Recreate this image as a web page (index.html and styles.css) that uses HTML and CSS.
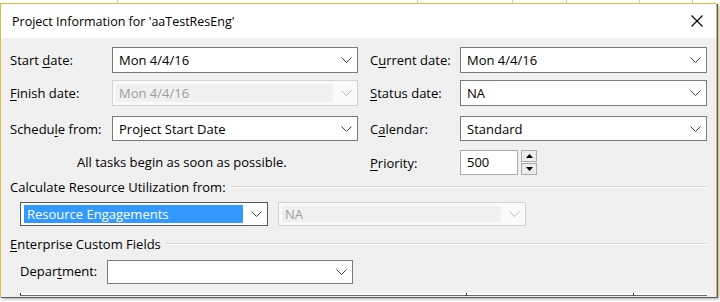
FILE: index.html
```html
<!DOCTYPE html>
<html lang="en">

<head>
  <meta charset="UTF-8">
  <title>Project Information</title>
  <link rel="stylesheet" href="styles.css">
</head>

<body>
  <div class="backdrop">
    <span style="width:118px"></span>
    <span style="width:300px"></span>
    <span style="width:95px"></span>
    <span style="width:54px"></span>
    <span style="width:73px"></span>
    <span style="width:53px"></span>
  </div>

  <div class="dialog">
    <div class="titlebar">
      <span class="title">Project Information for 'aaTestResEng'</span>
      <svg class="close" width="12" height="12" viewBox="0 0 12 12">
        <path d="M0.5 0.5 L11.5 11.5 M11.5 0.5 L0.5 11.5" stroke="#000" stroke-width="1.1" fill="none" />
      </svg>
    </div>

    <div class="content">
      <div class="form">
        <div class="lbl">Start <u>d</u>ate:</div>
        <div class="combo h26">
          <span class="val">Mon 4/4/16</span>
          <svg class="chev" width="11" height="6" viewBox="0 0 11 6"><polyline points="0.5,0.5 5.5,5.5 10.5,0.5" /></svg>
        </div>
        <div></div>
        <div class="lbl">C<u>u</u>rrent date:</div>
        <div class="combo h26">
          <span class="val">Mon 4/4/16</span>
          <svg class="chev" width="11" height="6" viewBox="0 0 11 6"><polyline points="0.5,0.5 5.5,5.5 10.5,0.5" /></svg>
        </div>

        <div class="lbl"><u>F</u>inish date:</div>
        <div class="combo h26 disabled">
          <span class="field">Mon 4/4/16</span>
          <svg class="chev" width="11" height="6" viewBox="0 0 11 6"><polyline points="0.5,0.5 5.5,5.5 10.5,0.5" /></svg>
        </div>
        <div></div>
        <div class="lbl"><u>S</u>tatus date:</div>
        <div class="combo h26">
          <span class="val">NA</span>
          <svg class="chev" width="11" height="6" viewBox="0 0 11 6"><polyline points="0.5,0.5 5.5,5.5 10.5,0.5" /></svg>
        </div>

        <div class="lbl">Schedu<u>l</u>e from:</div>
        <div class="combo">
          <span class="val">Project Start Date</span>
          <svg class="chev" width="11" height="6" viewBox="0 0 11 6"><polyline points="0.5,0.5 5.5,5.5 10.5,0.5" /></svg>
        </div>
        <div></div>
        <div class="lbl">C<u>a</u>lendar:</div>
        <div class="combo">
          <span class="val">Standard</span>
          <svg class="chev" width="11" height="6" viewBox="0 0 11 6"><polyline points="0.5,0.5 5.5,5.5 10.5,0.5" /></svg>
        </div>

        <div class="note">All tasks begin as soon as possible.</div>
        <div></div>
        <div class="lbl"><u>P</u>riority:</div>
        <div class="priority">
          <div class="num">500</div>
          <div class="spin">
            <div class="spin-btn"><svg width="7" height="4" viewBox="0 0 7 4"><polygon points="3.5,0 7,4 0,4" /></svg></div>
            <div class="spin-btn"><svg width="7" height="4" viewBox="0 0 7 4"><polygon points="0,0 7,0 3.5,4" /></svg></div>
          </div>
        </div>
      </div>

      <div class="section">Calculate Resource Utilization from:</div>
      <div class="util">
        <div class="combo h24 focused">
          <span class="selected">Resource Engagements</span>
          <svg class="chev" width="11" height="6" viewBox="0 0 11 6"><polyline points="0.5,0.5 5.5,5.5 10.5,0.5" /></svg>
        </div>
        <div class="combo h24 disabled">
          <span class="field">NA</span>
          <svg class="chev" width="11" height="6" viewBox="0 0 11 6"><polyline points="0.5,0.5 5.5,5.5 10.5,0.5" /></svg>
        </div>
      </div>

      <div class="section"><u>E</u>nterprise Custom Fields</div>
      <div class="dept">
        <div class="lbl">Depar<u>t</u>ment:</div>
        <div class="combo h24">
          <span class="val"></span>
          <svg class="chev" width="11" height="6" viewBox="0 0 11 6"><polyline points="0.5,0.5 5.5,5.5 10.5,0.5" /></svg>
        </div>
      </div>

      <div class="grid-edge">
        <span class="tick" style="left:445px"></span>
        <span class="tick" style="left:612px"></span>
      </div>
    </div>
  </div>
</body>

</html>
```

FILE: styles.css
```css
html,
body {
  margin: 0;
  background: #fff;
}

body {
  font-family: "Open Sans", "Noto Sans", sans-serif;
  font-size: 13px;
  color: #000;
  width: 720px;
  height: 302px;
  overflow: hidden;
}

u {
  text-decoration-thickness: 1px;
  text-underline-offset: 2px;
}

.backdrop {
  display: flex;
  height: 3px;
  background: #fff;
}

.backdrop span {
  flex: none;
  height: 3px;
  border-right: 1px solid #c8c8c8;
  box-sizing: border-box;
}

.dialog {
  box-sizing: border-box;
  width: 717px;
  height: 294px;
  border: 1px solid #dbbd45;
  border-bottom: 0;
  background: #f0f0f0;
  box-shadow: 1px 1px 0 #5a5a5a, 2px 2px 3px rgba(0, 0, 0, .35);
  overflow: hidden;
}

.titlebar {
  display: flex;
  align-items: center;
  height: 34px;
  padding: 0 13px 0 11px;
  background: #fff;
}

.title {
  font-size: 12.5px;
  flex-grow: 1;
}

.close {
  flex: none;
}

.content {
  padding: 9px 9px 0 9px;
}

.form {
  display: grid;
  grid-template-columns: 102px 246px 12px 90px 247px;
  grid-template-rows: 33px 36px 34px 25px;
}

.lbl {
  line-height: 26px;
  white-space: nowrap;
}

.combo {
  box-sizing: border-box;
  display: flex;
  align-items: center;
  height: 25px;
  border: 1px solid #7a7a7a;
  background: #fff;
}

.combo.h26 {
  height: 26px;
}

.combo.h24 {
  height: 24px;
}

.combo .val {
  flex-grow: 1;
  padding-left: 6px;
}

.chev {
  flex: none;
  margin: 0 5px 0 8px;
}

.chev polyline {
  fill: none;
  stroke: #404040;
  stroke-width: 1;
}

.combo.disabled {
  border-color: #d4d4d4;
  background: #fafafa;
  color: #9d9d9d;
}

.combo.disabled .field {
  flex-grow: 1;
  align-self: stretch;
  margin: 3px 0 3px 3px;
  padding-left: 3px;
  background: #f0f0f0;
  display: flex;
  align-items: center;
}

.combo.disabled .chev polyline {
  stroke: #b5b5b5;
}

.combo.focused {
  border-color: #595959;
}

.combo .selected {
  flex-grow: 1;
  align-self: stretch;
  margin: 2px 0 2px 3px;
  padding-left: 3px;
  background: #3399ff;
  color: #fff;
  display: flex;
  align-items: center;
}

.note {
  grid-column: 1 / 3;
  padding-left: 67px;
  line-height: 24px;
}

.priority {
  display: flex;
  gap: 3px;
}

.num {
  box-sizing: border-box;
  width: 58px;
  height: 25px;
  border: 1px solid #ababab;
  background: #fff;
  padding-left: 6px;
  line-height: 23px;
}

.spin {
  display: flex;
  flex-direction: column;
  gap: 1px;
  width: 16px;
}

.spin-btn {
  box-sizing: border-box;
  height: 12px;
  border: 1px solid #adadad;
  background: #ededed;
  display: flex;
  align-items: center;
  justify-content: center;
}

.spin-btn polygon {
  fill: #000;
}

.section {
  display: flex;
  align-items: center;
  margin-top: 4px;
  line-height: 16px;
  white-space: nowrap;
}

.section::after {
  content: "";
  flex-grow: 1;
  margin-left: 5px;
  border-top: 1px solid #d9d9d9;
  border-bottom: 1px solid #fafafa;
}

.util {
  display: flex;
  gap: 10px;
  margin: 7px 0 0 10px;
}

.util .combo {
  width: 248px;
}

.util + .section {
  margin-top: 10px;
}

.section + .dept {
  margin-top: 8px;
}

.dept {
  display: flex;
  margin-left: 10px;
}

.dept .lbl {
  width: 87px;
  line-height: 22px;
}

.dept .combo {
  width: 246px;
}

.grid-edge {
  position: relative;
  box-sizing: border-box;
  height: 3px;
  margin: 9px 0 0 10px;
  background: #fff;
  border-left: 1px solid #333;
  border-bottom: 1px solid #6a6a6a;
}

.tick {
  position: absolute;
  top: 0;
  width: 1px;
  height: 3px;
  background: #333;
}
```
